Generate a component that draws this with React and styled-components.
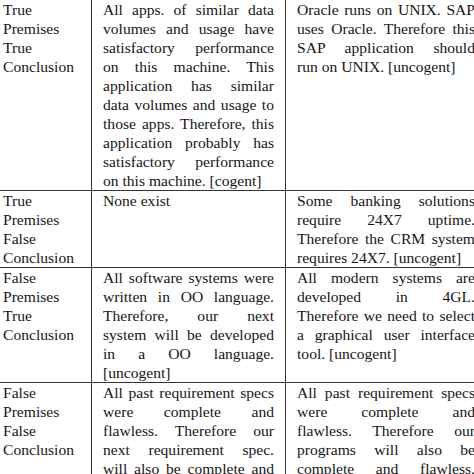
import React from 'react';
import styled, { createGlobalStyle } from 'styled-components';

const GlobalStyle = createGlobalStyle`
  html, body {
    margin: 0;
    padding: 0;
    background: #ffffff;
  }
`;

const ROWS = [
  {
    kind: ['True', 'Premises', 'True', 'Conclusion'],
    first: [
      'All apps. of similar data',
      'volumes and usage have',
      'satisfactory performance',
      'on this machine. This',
      'application has similar',
      'data volumes and usage to',
      'those apps. Therefore, this',
      'application probably has',
      'satisfactory performance',
      'on this machine. [cogent]',
    ],
    second: [
      'Oracle runs on UNIX. SAP',
      'uses Oracle. Therefore this',
      'SAP application should',
      'run on UNIX. [uncogent]',
    ],
  },
  {
    kind: ['True', 'Premises', 'False', 'Conclusion'],
    first: ['None exist'],
    second: [
      'Some banking solutions',
      'require 24X7 uptime.',
      'Therefore the CRM system',
      'requires 24X7. [uncogent]',
    ],
  },
  {
    kind: ['False', 'Premises', 'True', 'Conclusion'],
    first: [
      'All software systems were',
      'written in OO language.',
      'Therefore, our next',
      'system will be developed',
      'in a OO language.',
      '[uncogent]',
    ],
    second: [
      'All modern systems are',
      'developed in 4GL.',
      'Therefore we need to select',
      'a graphical user interface',
      'tool. [uncogent]',
    ],
  },
  {
    kind: ['False', 'Premises', 'False', 'Conclusion'],
    first: [
      'All past requirement specs',
      'were complete and',
      'flawless. Therefore our',
      'next requirement spec.',
      'will also be complete and',
      'flawless. [uncogent]',
    ],
    second: [
      'All past requirement specs',
      'were complete and',
      'flawless. Therefore our',
      'programs will also be',
      'complete and flawless.',
      '[uncogent]',
    ],
  },
];

const Frame = styled.div`
  width: 474px;
  height: 474px;
  overflow: hidden;
  background: #ffffff;
`;

const Table = styled.table`
  width: 495px;
  margin: -1.5px 0 0 -9px;
  border-collapse: collapse;
  table-layout: fixed;
  font-family: 'Liberation Serif', 'Times New Roman', serif;
  font-size: 15.6px;
  line-height: 19px;
  color: #161616;
`;

const Col = styled.col`
  width: ${(props) => props.width}px;
`;

const Cell = styled.td`
  padding: 0 11px;
  vertical-align: top;
  border: 1.5px solid #333333;
`;

const Line = styled.span`
  display: block;
  text-align: ${(props) => (props.justify ? 'justify' : 'left')};
  text-align-last: ${(props) => (props.justify ? 'justify' : 'left')};
  white-space: nowrap;
`;

const Lines = ({ items, justify }) =>
  items.map((text, i) => (
    <Line key={i} justify={justify && i < items.length - 1}>
      {text}
    </Line>
  ));

const App = () => {
  return (
    <Frame>
      <GlobalStyle />
      <Table>
        <colgroup>
          <Col width={100} />
          <Col width={194} />
          <Col width={201} />
        </colgroup>
        <tbody>
          {ROWS.map((row, i) => (
            <tr key={i}>
              <Cell>
                <Lines items={row.kind} />
              </Cell>
              <Cell>
                <Lines items={row.first} justify />
              </Cell>
              <Cell>
                <Lines items={row.second} justify />
              </Cell>
            </tr>
          ))}
        </tbody>
      </Table>
    </Frame>
  );
};

export default App;
